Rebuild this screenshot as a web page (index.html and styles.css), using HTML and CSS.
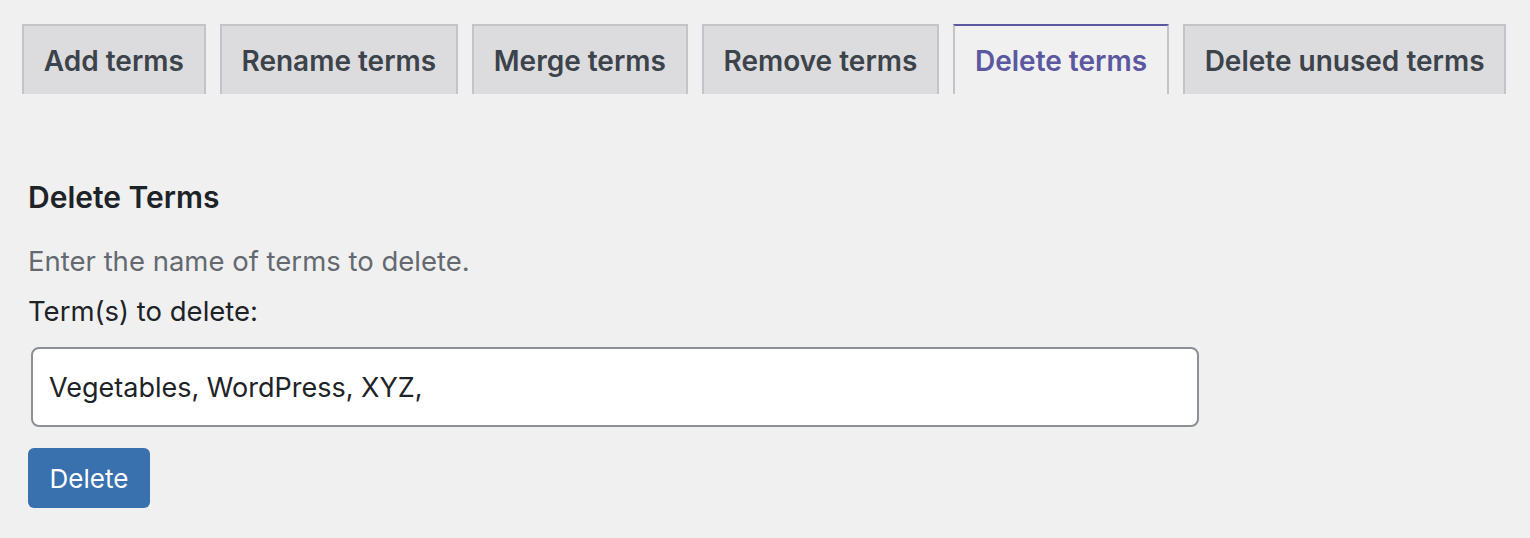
FILE: index.html
```html
<!DOCTYPE html>
<html lang="en">
<head>
	<meta charset="UTF-8">
	<title>Terms tools</title>
	<link rel="stylesheet" href="styles.css">
</head>
<body>
	<div class="wrap">
		<nav class="nav-tabs">
			<a class="nav-tab" href="#">Add terms</a>
			<a class="nav-tab" href="#">Rename terms</a>
			<a class="nav-tab" href="#">Merge terms</a>
			<a class="nav-tab" href="#">Remove terms</a>
			<a class="nav-tab nav-tab-active" href="#">Delete terms</a>
			<a class="nav-tab" href="#">Delete unused terms</a>
		</nav>

		<form class="term-form">
			<h2 class="form-title">Delete Terms</h2>
			<p class="description">Enter the name of terms to delete.</p>
			<label class="field-label" for="terms">Term(s) to delete:</label>
			<input class="terms-input" id="terms" type="text" value="Vegetables, WordPress, XYZ,">
			<button class="button-primary" type="button">Delete</button>
		</form>
	</div>
</body>
</html>
```

FILE: styles.css
```css
html {
	background: #f0f0f1;
}
body {
	margin: 0;
	padding: 0;
	font-family: Inter, "Noto Sans", sans-serif;
	color: #1d2327;
}
.wrap {
	padding: 24px 22px 0 22px;
}
.nav-tabs {
	display: flex;
	gap: 14px;
}
.nav-tab {
	display: block;
	flex-shrink: 0;
	box-sizing: border-box;
	height: 70px;
	padding: 3px 19.8px 0;
	line-height: 65px;
	font-size: 28px;
	font-weight: 600;
	white-space: nowrap;
	color: #3c434a;
	text-decoration: none;
	background: #dcdcde;
	border: 2px solid #c3c4c7;
	border-bottom: none;
}
.nav-tab-active {
	background: #f0f0f1;
	color: #5b57a0;
	border-top-color: #5b57a0;
}
.term-form {
	display: flex;
	flex-direction: column;
	align-items: flex-start;
	padding: 0 6px;
}
.form-title {
	margin: 86px 0 0;
	font-size: 30px;
	font-weight: 600;
	line-height: 34px;
}
.description {
	margin: 30px 0 0;
	font-size: 27.5px;
	line-height: 34px;
	color: #646970;
}
.field-label {
	margin-top: 16px;
	font-size: 27.5px;
	line-height: 34px;
}
.terms-input {
	box-sizing: border-box;
	width: 1168px;
	height: 80px;
	margin: 19px 0 0 3px;
	padding: 0 16px;
	font-family: inherit;
	font-size: 27px;
	color: #1d2327;
	background: #fff;
	border: 2px solid #8c8f94;
	border-radius: 8px;
}
.button-primary {
	height: 60px;
	width: 122px;
	margin-top: 21px;
	font-family: inherit;
	font-size: 26px;
	color: #fff;
	background: #3871ad;
	border: none;
	border-radius: 6px;
}
```
